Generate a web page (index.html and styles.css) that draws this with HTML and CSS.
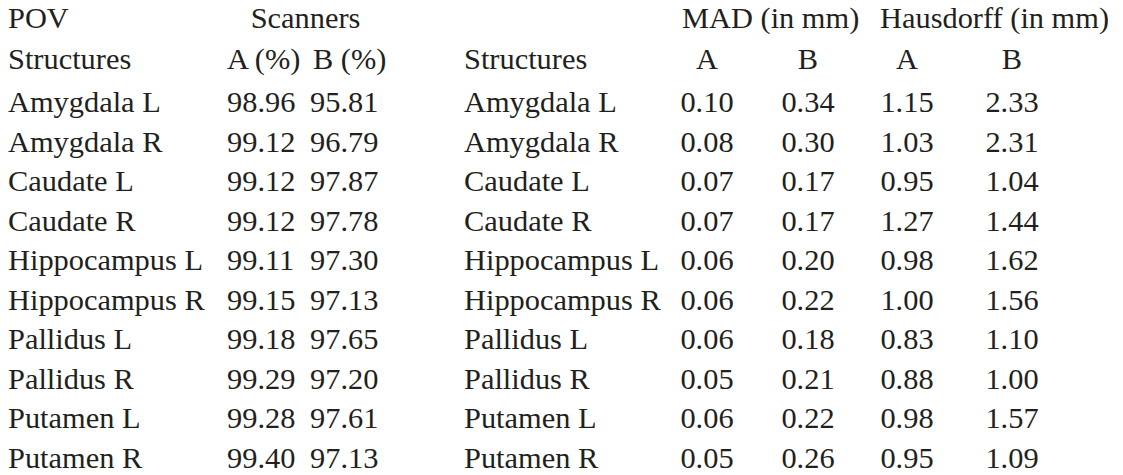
FILE: index.html
```html
<!DOCTYPE html>
<html lang="en">
<head>
<meta charset="utf-8">
<title>Segmentation comparison</title>
<link rel="stylesheet" href="styles.css">
</head>
<body>
<div class="tbl">
  <div class="c1 h1">POV</div>
  <div class="span2 center h1">Scanners</div>
  <div class="gap h1"></div>
  <div class="c5 h1"></div>
  <div class="span2 h1 grp">MAD (in mm)</div>
  <div class="span2 h1 grp">Hausdorff (in mm)</div>

  <div class="h2">Structures</div>
  <div class="h2">A (%)</div>
  <div class="h2 bcol">B (%)</div>
  <div class="h2"></div>
  <div class="h2">Structures</div>
  <div class="h2 n">A</div>
  <div class="h2 n">B</div>
  <div class="h2 n">A</div>
  <div class="h2 n">B</div>

  <div>Amygdala L</div><div>98.96</div><div>95.81</div><div></div><div>Amygdala L</div><div class="n">0.10</div><div class="n">0.34</div><div class="n">1.15</div><div class="n">2.33</div>
  <div>Amygdala R</div><div>99.12</div><div>96.79</div><div></div><div>Amygdala R</div><div class="n">0.08</div><div class="n">0.30</div><div class="n">1.03</div><div class="n">2.31</div>
  <div>Caudate L</div><div>99.12</div><div>97.87</div><div></div><div>Caudate L</div><div class="n">0.07</div><div class="n">0.17</div><div class="n">0.95</div><div class="n">1.04</div>
  <div>Caudate R</div><div>99.12</div><div>97.78</div><div></div><div>Caudate R</div><div class="n">0.07</div><div class="n">0.17</div><div class="n">1.27</div><div class="n">1.44</div>
  <div>Hippocampus L</div><div>99.11</div><div>97.30</div><div></div><div>Hippocampus L</div><div class="n">0.06</div><div class="n">0.20</div><div class="n">0.98</div><div class="n">1.62</div>
  <div>Hippocampus R</div><div>99.15</div><div>97.13</div><div></div><div>Hippocampus R</div><div class="n">0.06</div><div class="n">0.22</div><div class="n">1.00</div><div class="n">1.56</div>
  <div>Pallidus L</div><div>99.18</div><div>97.65</div><div></div><div>Pallidus L</div><div class="n">0.06</div><div class="n">0.18</div><div class="n">0.83</div><div class="n">1.10</div>
  <div>Pallidus R</div><div>99.29</div><div>97.20</div><div></div><div>Pallidus R</div><div class="n">0.05</div><div class="n">0.21</div><div class="n">0.88</div><div class="n">1.00</div>
  <div>Putamen L</div><div>99.28</div><div>97.61</div><div></div><div>Putamen L</div><div class="n">0.06</div><div class="n">0.22</div><div class="n">0.98</div><div class="n">1.57</div>
  <div>Putamen R</div><div>99.40</div><div>97.13</div><div></div><div>Putamen R</div><div class="n">0.05</div><div class="n">0.26</div><div class="n">0.95</div><div class="n">1.09</div>
</div>
</body>
</html>
```
FILE: styles.css
```css
html, body {
  margin: 0;
  padding: 0;
  background: #ffffff;
  overflow: hidden;
}
body {
  font-family: "Liberation Serif", "Times New Roman", serif;
  font-size: 30.4px;
  color: #231f20;
}
.tbl {
  display: grid;
  grid-template-columns: 219px 83px 74px 80px 216px 101px 99px 105px auto;
  grid-template-rows: 36px 47px;
  grid-auto-rows: 39.55px;
  padding-left: 8px;
  line-height: 39.55px;
  white-space: nowrap;
}
.tbl > div {
  display: flex;
  align-items: center;
}
.span2 {
  grid-column: span 2;
}
.center {
  justify-content: center;
}
.h1 {
  line-height: 36px;
}
.h2 {
  line-height: 47px;
}
.tbl > .n {
  width: 54px;
  justify-content: center;
}
.grp {
  justify-content: flex-start;
}
.grp:nth-child(5) {
  padding-left: 2px;
}
.bcol {
  padding-left: 3px;
}
```
